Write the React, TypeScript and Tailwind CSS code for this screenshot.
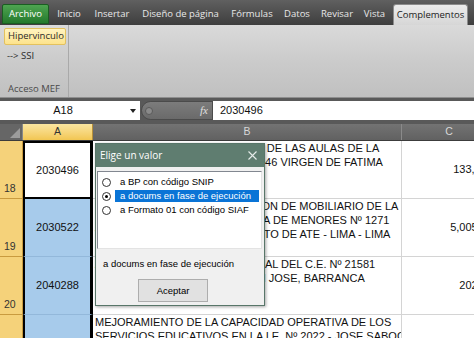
import React from 'react';

const rows = [
  {
    n: 18,
    a: '2030496',
    c: '133,426',
    active: true,
    b: ['MEJORAMIENTO Y AMPLIACION DE LAS AULAS DE LA', 'INSTITUCION EDUCATIVA Nro 2046 VIRGEN DE FATIMA'],
  },
  {
    n: 19,
    a: '2030522',
    c: '5,005.47',
    active: false,
    b: [
      'MEJORAMIENTO DE LA DOTACION DE MOBILIARIO DE LA',
      'DE LA IE CUNA JARDIN ESCUELA DE MENORES Nº 1271',
      'VITARTE, SANTA CLARA, DISTRITO DE ATE - LIMA - LIMA',
    ],
  },
  {
    n: 20,
    a: '2040288',
    c: '202.15',
    active: false,
    b: ['ACONDICIONAMIENTO DEL LOCAL DEL C.E. Nº 21581', 'DEL CENTRO POBLADO DE SAN JOSE, BARRANCA'],
  },
  {
    n: 21,
    a: '',
    c: '',
    active: false,
    b: ['MEJORAMIENTO DE LA CAPACIDAD OPERATIVA DE LOS', 'SERVICIOS EDUCATIVOS EN LA I.E. Nº 2022 - JOSE SABOGAL'],
  },
];

const tabs = [
  { label: 'Inicio', w: 'w-[40px]' },
  { label: 'Insertar', w: 'w-[46px]' },
  { label: 'Diseño de página', w: 'w-[91px]' },
  { label: 'Fórmulas', w: 'w-[52px]' },
  { label: 'Datos', w: 'w-[38px]' },
  { label: 'Revisar', w: 'w-[42px]' },
  { label: 'Vista', w: 'w-[33px]' },
];

const options = ['a BP con código SNIP', 'a docums en fase de ejecución', 'a Formato 01 con código SIAF'];

export default function App() {
  return (
    <div className="relative w-[474px] h-[338px] overflow-hidden bg-white font-['Open_Sans',sans-serif]">
      {/* Ribbon tabs */}
      <div className="flex items-end h-[25px] bg-gradient-to-b from-[#606060] to-[#3e3e3e] text-[9.5px] text-[#e8e8e8]">
        <div className="ml-[2px] mb-[1px] w-[47px] h-[20px] flex items-center justify-center rounded-t-[2px] bg-gradient-to-b from-[#4ea551] to-[#23792c] text-white border border-[#1b5e22]">
          Archivo
        </div>
        {tabs.map((t) => (
          <div key={t.label} className={`${t.w} h-[21px] flex items-center justify-center`}>
            {t.label}
          </div>
        ))}
        <div className="ml-[2px] w-[75px] h-[21px] flex items-center justify-center rounded-t-[3px] bg-gradient-to-b from-[#ececec] to-[#d6d6d6] border border-b-0 border-[#8c8c8c] text-[#222]">
          Complementos
        </div>
      </div>

      {/* Ribbon body */}
      <div className="flex h-[73px] bg-gradient-to-b from-[#dadada] via-[#cbcbcb] to-[#c0c0c0] border-b border-[#8e8e8e]">
        <div className="w-[69px] flex flex-col border-r border-[#a9a9a9] text-[9.5px] text-[#2a2a2a]">
          <div className="ml-[4px] mt-[3px] w-[62px] h-[17px] flex items-center pl-[3px] rounded-[2px] bg-gradient-to-b from-[#fff3bf] to-[#fde38c] border border-[#e3c15e]">
            Hipervinculo
          </div>
          <div className="ml-[7px] mt-[4px]">--&gt; SSI</div>
          <div className="mt-auto mb-[1px] text-center text-[#4a4a4a]">Acceso MEF</div>
        </div>
      </div>

      {/* Formula bar */}
      <div className="flex items-start h-[26px] pt-[3px] bg-[#595959] font-['Liberation_Sans',Arial,sans-serif] text-[11px] text-[#111]">
        <div className="w-[140px] h-[19px] bg-white flex items-center">
          <div className="flex-1 text-center">A18</div>
          <svg className="w-[14px] h-[6px]" viewBox="0 0 14 6">
            <path d="M4 1h6l-3 4z" fill="#222" />
          </svg>
        </div>
        <div className="ml-[1px] w-[72px] h-[19px] flex items-center rounded-l-full bg-gradient-to-b from-[#7c7c7c] to-[#6a6a6a] border border-[#4b4b4b]">
          <div className="ml-[3px] w-[8px] h-[8px] rounded-full bg-[#8a8a8a] border border-[#5a5a5a]" />
          <div className="ml-auto mr-[4px] font-['Liberation_Serif',serif] italic text-[11px] text-[#e0e0e0]">fx</div>
        </div>
        <div className="flex-1 h-[19px] bg-white flex items-center pl-[7px]">2030496</div>
      </div>

      {/* Column headers */}
      <div className="flex h-[17px] text-[10.5px] font-['Liberation_Sans',Arial,sans-serif] border-b border-[#3c3c3c]">
        <div className="w-[23px] shrink-0 bg-[#666] border-r border-[#888] flex items-end justify-end p-[2px]">
          <svg className="w-[10px] h-[10px]" viewBox="0 0 10 10">
            <path d="M10 0v10H0z" fill="#9c9c9c" />
          </svg>
        </div>
        <div className="w-[70px] shrink-0 bg-gradient-to-b from-[#fbe6a0] to-[#f2c651] flex items-center justify-center text-[#333] border-r border-[#b8913a]">A</div>
        <div className="w-[309px] shrink-0 bg-gradient-to-b from-[#737373] to-[#616161] flex items-center justify-center text-[#d8d8d8] border-r border-[#8a8a8a]">B</div>
        <div className="w-[94px] shrink-0 bg-gradient-to-b from-[#737373] to-[#616161] flex items-center justify-center text-[#d8d8d8]">C</div>
      </div>

      {/* Sheet rows */}
      <div className="font-['Liberation_Sans',Arial,sans-serif] text-[11px] text-[#111]">
        {rows.map((r) => (
          <div key={r.n} className="flex h-[58px]">
            <div className="w-[23px] shrink-0 bg-[#f5d27a] border-r border-b border-[#c99b3f] flex items-end pl-[4px] pb-[1px] text-[10.5px] text-[#333]">
              {r.n}
            </div>
            <div
              className={`w-[70px] shrink-0 flex items-center justify-center border-l-[2px] border-r-[3px] border-black ${
                r.active ? 'bg-white border-t-[2px] border-b-[2px]' : 'bg-[#a7cbeb] border-b border-b-[#93b8da]'
              }`}
            >
              {r.a}
            </div>
            <div className="w-[309px] shrink-0 overflow-hidden border-r border-b border-[#d4d4d4] pl-[2px] leading-[14px] whitespace-nowrap">
              {r.b.map((line) => (
                <div key={line}>{line}</div>
              ))}
            </div>
            <div className="w-[94px] shrink-0 flex items-center justify-end pr-[3px] border-b border-[#d4d4d4]">{r.c}</div>
          </div>
        ))}
      </div>

      {/* Dialog "Elige un valor" */}
      <div className="absolute left-[95px] top-[143px] w-[170px] h-[163px] flex flex-col border border-[#587669] bg-[#f0f0f0] shadow-[1px_1px_3px_rgba(0,0,0,0.35)] font-['Liberation_Sans',Arial,sans-serif] text-[9.5px] text-black">
        <div className="h-[23px] shrink-0 flex items-center pl-[4px] pr-[7px] bg-[#5f7d70] text-white text-[10px] font-['Open_Sans',sans-serif]">
          <span>Elige un valor</span>
          <svg className="ml-auto w-[9px] h-[9px]" viewBox="0 0 9 9" fill="none" stroke="#e6ece9" strokeWidth="1.1">
            <path d="M0.5 0.5l8 8M8.5 0.5l-8 8" />
          </svg>
        </div>
        <div className="mt-[4px] ml-[1px] w-[165px] h-[78px] bg-white border border-[#828790] border-r-[#e3e3e3] border-b-[#e3e3e3] pt-[3px]">
          {options.map((o, i) => (
            <div key={o} className="flex items-center h-[14px]">
              <div className="ml-[4px] w-[9px] h-[9px] shrink-0 rounded-full border border-[#333] bg-white flex items-center justify-center">
                {i === 1 && <div className="w-[3px] h-[3px] rounded-full bg-black" />}
              </div>
              <div
                className={`ml-[4px] mr-[2px] flex-1 h-[12px] flex items-center pl-[5px] ${
                  i === 1 ? 'bg-[#0a74d6] text-white' : ''
                }`}
              >
                {o}
              </div>
            </div>
          ))}
        </div>
        <div className="mt-[8px] ml-[7px]">a docums en fase de ejecución</div>
        <div className="mt-[8px] ml-[42px] w-[70px] h-[23px] flex items-center justify-center bg-[#e1e1e1] border border-[#adadad]">
          Aceptar
        </div>
      </div>
    </div>
  );
}
